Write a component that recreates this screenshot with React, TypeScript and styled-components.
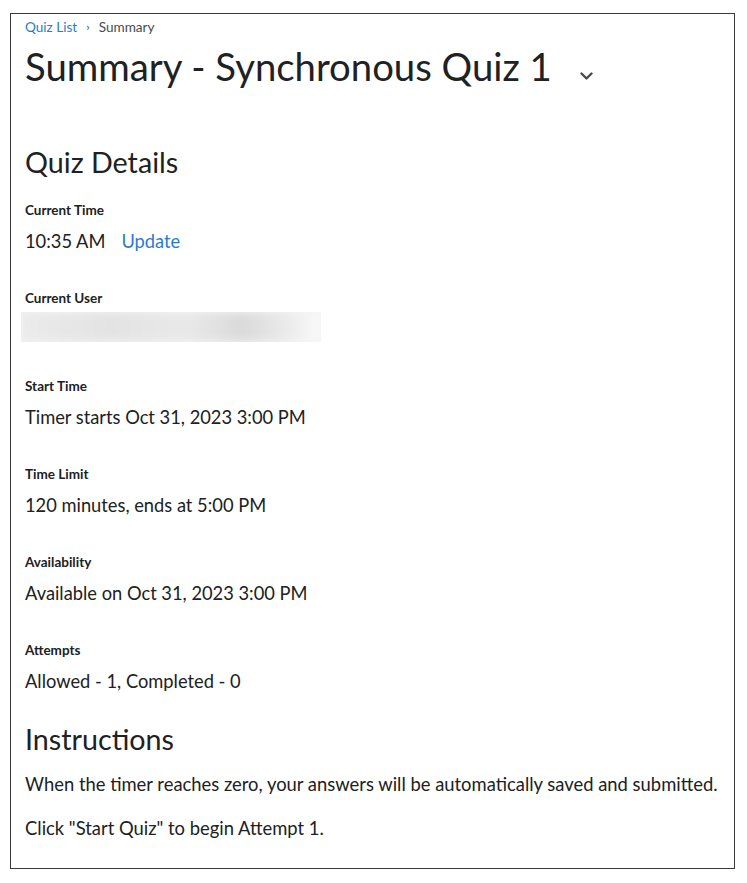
import React from 'react';
import styled, { createGlobalStyle } from 'styled-components';

const GlobalStyle = createGlobalStyle`
  html, body {
    margin: 0;
    padding: 0;
    background: #ffffff;
  }
  body {
    font-family: Lato, "Open Sans", sans-serif;
    color: #202122;
  }
`;

interface Field {
  label: string;
  value?: string;
  link?: string;
  blurred?: boolean;
}

const fields: Field[] = [
  { label: 'Current Time', value: '10:35 AM', link: 'Update' },
  { label: 'Current User', blurred: true },
  { label: 'Start Time', value: 'Timer starts Oct 31, 2023 3:00 PM' },
  { label: 'Time Limit', value: '120 minutes, ends at 5:00 PM' },
  { label: 'Availability', value: 'Available on Oct 31, 2023 3:00 PM' },
  { label: 'Attempts', value: 'Allowed - 1, Completed - 0' },
];

export default function App() {
  return (
    <>
      <GlobalStyle />
      <Frame>
        <Breadcrumbs>
          <a href="#">Quiz List</a>
          <span className="sep">›</span>
          <span>Summary</span>
        </Breadcrumbs>
        <TitleRow>
          <Title>Summary - Synchronous Quiz 1</Title>
          <ChevronButton type="button" aria-label="Actions">
            <svg width="13" height="9" viewBox="0 0 13 9">
              <polyline points="1.5,1.5 6.5,6.5 11.5,1.5" fill="none" stroke="#494c4e" strokeWidth="2.4" strokeLinecap="round" strokeLinejoin="round" />
            </svg>
          </ChevronButton>
        </TitleRow>

        <SectionHeading $top={52}>Quiz Details</SectionHeading>
        <Fields>
          {fields.map((f) => (
            <FieldBlock key={f.label}>
              <Label>{f.label}</Label>
              {f.blurred ? (
                <Blurred>
                  <div />
                </Blurred>
              ) : (
                <Value>
                  {f.value}
                  {f.link && <a href="#">{f.link}</a>}
                </Value>
              )}
            </FieldBlock>
          ))}
        </Fields>

        <SectionHeading $top={25}>Instructions</SectionHeading>
        <Paragraph>When the timer reaches zero, your answers will be automatically saved and submitted.</Paragraph>
        <Paragraph>Click "Start Quiz" to begin Attempt 1.</Paragraph>
      </Frame>
    </>
  );
}

const Frame = styled.div`
  box-sizing: border-box;
  margin: 13px 0 0 10px;
  width: 725px;
  height: 856px;
  border: 1.5px solid #3a3a3a;
  padding: 5px 14px 0 14px;
  display: flex;
  flex-direction: column;
`;

const Breadcrumbs = styled.nav`
  display: flex;
  align-items: center;
  gap: 9px;
  font-size: 13.6px;
  line-height: 16px;
  color: #494c4e;

  a {
    color: #2b7bce;
    text-decoration: none;
  }

  .sep {
    font-size: 12px;
    color: #494c4e;
  }
`;

const TitleRow = styled.div`
  display: flex;
  align-items: flex-start;
  gap: 28px;
  margin-top: 7px;
`;

const Title = styled.h1`
  margin: 0;
  font-size: 38.3px;
  font-weight: 400;
  line-height: 48px;
  color: #202122;
`;

const ChevronButton = styled.button`
  border: none;
  background: transparent;
  padding: 0;
  margin-top: 30px;
  display: flex;
`;

const SectionHeading = styled.h2<{ $top: number }>`
  margin: ${(p) => p.$top}px 0 0 0;
  font-size: 28.7px;
  font-weight: 400;
  line-height: 40px;
  color: #202122;
`;

const Fields = styled.div`
  display: flex;
  flex-direction: column;
  gap: 36px;
  margin-top: 20px;
`;

const FieldBlock = styled.div`
  display: flex;
  flex-direction: column;
  gap: 10px;
`;

const Label = styled.div`
  font-size: 13.5px;
  font-weight: 700;
  line-height: 16px;
  color: #202122;
`;

const Value = styled.div`
  font-size: 18.3px;
  line-height: 26px;
  color: #202122;
  display: flex;
  gap: 16px;

  a {
    color: #2b7bce;
    text-decoration: none;
  }
`;

const Blurred = styled.div`
  margin: -4px 0 0 -4px;
  width: 300px;
  height: 30px;
  overflow: hidden;
  background: #f3f3f3;

  div {
    height: 100%;
    background: linear-gradient(
      90deg,
      #ebebeb 0%,
      #e3e3e3 30%,
      #e9e9e9 55%,
      #dadada 74%,
      #ececec 90%,
      #fbfbfb 100%
    );
    filter: blur(5px);
  }
`;

const Paragraph = styled.p`
  margin: 9px 0 0 0;
  font-size: 18.4px;
  line-height: 32px;
  color: #202122;

  & + & {
    margin-top: 12px;
  }
`;
